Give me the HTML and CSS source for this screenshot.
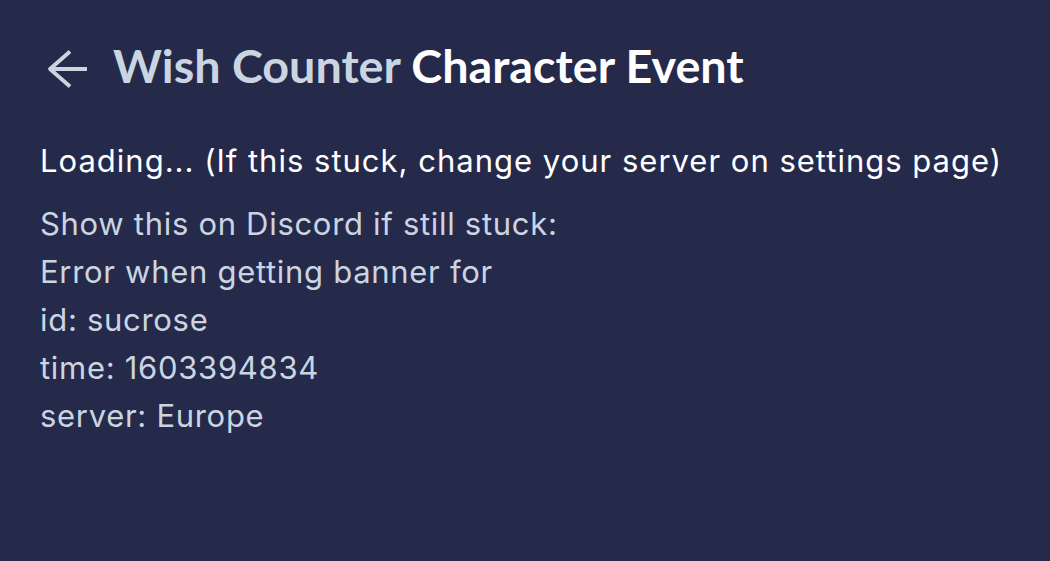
FILE: index.html
```html
<!DOCTYPE html>
<html>
<head>
<meta charset="utf-8">
<link rel="stylesheet" href="styles.css">
</head>
<body>
<div class="page">
  <header class="header">
    <a class="back" href="#">
      <svg width="42" height="38" viewBox="0 0 42 38" fill="none" stroke="currentColor" stroke-width="3.8" stroke-linecap="butt" stroke-linejoin="round"><path d="M41 19H4"/><path d="M24 1.5L4 19L24 36.5"/></svg>
    </a>
    <h1 class="title"><span class="muted">Wish Counter</span> Character Event</h1>
  </header>
  <p class="loading">Loading... (If this stuck, change your server on settings page)</p>
  <div class="details">
    <div>Show this on Discord if still stuck:</div>
    <div>Error when getting banner for</div>
    <div>id: sucrose</div>
    <div>time: 1603394834</div>
    <div>server: Europe</div>
  </div>
</div>
</body>
</html>
```
FILE: styles.css
```css
html, body {
  margin: 0;
  background: #252a4b;
  height: 100%;
}
.page {
  padding: 36px 40px;
  font-family: "Inter", "DejaVu Sans", sans-serif;
}
.header {
  display: flex;
  align-items: flex-start;
  gap: 25px;
  height: 56px;
  margin-left: 6px;
}
.back {
  color: #cbd5e1;
  display: flex;
  margin-top: 14px;
}
.title {
  margin: 0;
  margin-top: 1px;
  font-family: "Lato", sans-serif;
  font-weight: 700;
  font-size: 46.7px;
  line-height: 56px;
  color: #ffffff;
}
.muted { color: #cbd5e1; }
.loading {
  margin: 0;
  margin-top: 45px;
  color: #ffffff;
  font-size: 31px;
  letter-spacing: 1px;
  line-height: 48px;
}
.details {
  margin-top: 15px;
  color: #cbd5e1;
  font-size: 31px;
  letter-spacing: 0.7px;
  line-height: 48px;
}
```
